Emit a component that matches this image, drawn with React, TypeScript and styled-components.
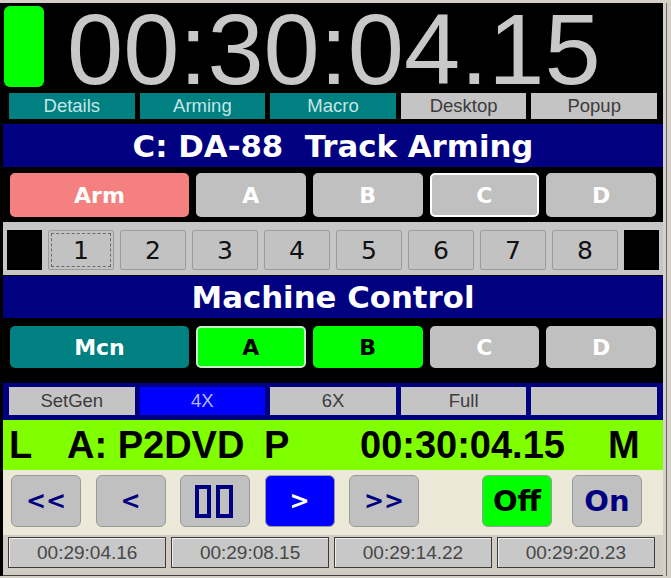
import React from "react";
import styled, { createGlobalStyle } from "styled-components";

const GlobalStyle = createGlobalStyle`
  html, body { margin: 0; padding: 0; background: #d4d0c8; }
  body {
    width: 671px; height: 578px; overflow: hidden;
    font-family: "Liberation Sans", Arial, sans-serif;
  }
`;

const TAHOMA = `"DejaVu Sans", Verdana, sans-serif`;

const Page = styled.div`
  padding-top: 3px;
  display: flex;
`;

const Panel = styled.div`
  width: 660px;
  padding-left: 3px;
  background: #000;
  display: flex;
  flex-direction: column;
  box-shadow: 3px 0 0 #d4d0c8, 4px 0 0 #6c6c6c;
`;

const TopArea = styled.div`
  height: 90px;
  display: flex;
  align-items: flex-start;
`;

const Indicator = styled.div`
  margin: 3px 0 0 1px;
  width: 40px;
  height: 81px;
  background: #00ff00;
  border-radius: 6px;
`;

const BigTime = styled.div`
  margin: 2px 0 0 23px;
  height: 86px;
  color: #c8c8c8;
  font-size: 101px;
  line-height: 88px;
  white-space: nowrap;
`;

const TabBar = styled.div`
  display: grid;
  grid-template-columns: repeat(5, 1fr);
  gap: 5px;
  padding: 0 6px;
  height: 26px;
`;

const Tab = styled.div<{ $kind: "teal" | "gray" | "blue" }>`
  display: flex;
  align-items: center;
  justify-content: center;
  font-size: 18.5px;
  line-height: 22px;
  background: ${(p) => (p.$kind === "teal" ? "#008080" : p.$kind === "blue" ? "#0000ff" : "#c4c4c4")};
  color: ${(p) => (p.$kind === "teal" ? "#c4e6e6" : p.$kind === "blue" ? "#b4b8ff" : "#3c3c3c")};
`;

const Header = styled.div<{ $mt: number; $h: number }>`
  margin-top: ${(p) => p.$mt}px;
  height: ${(p) => p.$h}px;
  background: #000080;
  color: #fff;
  font-family: ${TAHOMA};
  font-weight: bold;
  font-size: 30.8px;
  line-height: 36px;
  white-space: pre;
  display: flex;
  align-items: center;
  justify-content: center;
`;

const ButtonRow = styled.div<{ $mt: number; $h: number }>`
  margin-top: ${(p) => p.$mt}px;
  height: ${(p) => p.$h}px;
  padding: 0 7px;
  display: grid;
  grid-template-columns: 179px repeat(4, 1fr);
  gap: 7px;
`;

const BigButton = styled.div<{ $bg: string; $fg?: string; $ring?: string }>`
  background: ${(p) => p.$bg};
  color: ${(p) => p.$fg ?? "#fff"};
  border: 2px solid ${(p) => p.$ring ?? p.$bg};
  border-radius: 5px;
  box-sizing: border-box;
  font-family: ${TAHOMA};
  font-weight: bold;
  font-size: 22px;
  display: flex;
  align-items: center;
  justify-content: center;
`;

const NumberStrip = styled.div`
  margin-top: 5px;
  height: 40px;
  padding: 8px 4px 5px;
  background: #c6c6c6;
  display: grid;
  grid-template-columns: 35px repeat(8, 1fr) 35px;
  gap: 6px;
`;

const BlackSquare = styled.div`
  background: #000;
`;

const NumButton = styled.div<{ $focus?: boolean }>`
  position: relative;
  background: #c2c2c2;
  border: 1px solid #9c9c9c;
  border-radius: 2px;
  display: flex;
  align-items: center;
  justify-content: center;
  font-family: ${TAHOMA};
  font-size: 25px;
  color: #111;
  &::after {
    content: "";
    display: ${(p) => (p.$focus ? "block" : "none")};
    position: absolute;
    inset: 2px;
    border: 1px dashed #6a6a6a;
  }
`;

const SpeedFrame = styled.div`
  margin-top: 15px;
  background: #000080;
  padding: 4px 6px 5px;
  height: 28px;
  display: grid;
  grid-template-columns: repeat(5, 1fr);
  gap: 5px;
`;

const StatusBar = styled.div`
  height: 50px;
  background: #80ff00;
  padding-left: 6px;
  display: grid;
  grid-template-columns: 58px 197px 96px 248px 1fr;
  align-items: center;
  font-size: 38px;
  line-height: 44px;
  font-weight: bold;
  color: #000;
  white-space: nowrap;
`;

const Transport = styled.div`
  height: 52px;
  background: #ece9d8;
  padding: 5px 21px 8px 8px;
  display: flex;
`;

const TGroup = styled.div<{ $gap: number; $ml?: string }>`
  display: flex;
  gap: ${(p) => p.$gap}px;
  margin-left: ${(p) => p.$ml ?? "0"};
`;

const TButton = styled.div<{ $bg?: string; $fg?: string; $size?: number }>`
  width: 70px;
  height: 52px;
  box-sizing: border-box;
  background: ${(p) => p.$bg ?? "#c0c0c0"};
  color: ${(p) => p.$fg ?? "#000080"};
  border: 1px solid #9a9a9a;
  border-radius: 6px;
  display: flex;
  align-items: center;
  justify-content: center;
  font-family: ${TAHOMA};
  font-weight: bold;
  font-size: ${(p) => p.$size ?? 24}px;
`;

const TimeRow = styled.div`
  height: 38px;
  padding: 2px 8px 0 5px;
  background: #d0ccc4;
  border-bottom: 1px solid #404040;
  display: grid;
  grid-template-columns: repeat(4, 1fr);
  gap: 4.5px;
  align-items: start;
`;

const TimeField = styled.div`
  height: 29px;
  background: #c8c8c8;
  border: 1px solid #3c3c3c;
  box-shadow: inset 1px 1px 0 #eeeeee;
  display: flex;
  align-items: center;
  justify-content: center;
  font-size: 19px;
  line-height: 22px;
  color: #474747;
`;

const PauseIcon = () => (
  <svg width="40" height="33" viewBox="0 0 40 33">
    <rect x="2" y="2" width="12" height="29" fill="none" stroke="#000080" strokeWidth="4" />
    <rect x="23" y="2" width="13" height="29" fill="none" stroke="#000080" strokeWidth="4" />
  </svg>
);

export default function App() {
  return (
    <>
      <GlobalStyle />
      <Page>
        <Panel>
          <TopArea>
            <Indicator />
            <BigTime>00:30:04.15</BigTime>
          </TopArea>
          <TabBar>
            <Tab $kind="teal">Details</Tab>
            <Tab $kind="teal">Arming</Tab>
            <Tab $kind="teal">Macro</Tab>
            <Tab $kind="gray">Desktop</Tab>
            <Tab $kind="gray">Popup</Tab>
          </TabBar>
          <Header $mt={5} $h={43}>{"C: DA-88  Track Arming"}</Header>
          <ButtonRow $mt={6} $h={44}>
            <BigButton $bg="#f48080">Arm</BigButton>
            <BigButton $bg="#c0c0c0">A</BigButton>
            <BigButton $bg="#c0c0c0">B</BigButton>
            <BigButton $bg="#c0c0c0" $ring="#ffffff">C</BigButton>
            <BigButton $bg="#c0c0c0">D</BigButton>
          </ButtonRow>
          <NumberStrip>
            <BlackSquare />
            {[1, 2, 3, 4, 5, 6, 7, 8].map((n) => (
              <NumButton key={n} $focus={n === 1}>{n}</NumButton>
            ))}
            <BlackSquare />
          </NumberStrip>
          <Header $mt={1} $h={42}>Machine Control</Header>
          <ButtonRow $mt={8} $h={42}>
            <BigButton $bg="#008080">Mcn</BigButton>
            <BigButton $bg="#00ff00" $fg="#000" $ring="#c8f0c8">A</BigButton>
            <BigButton $bg="#00ff00" $fg="#000">B</BigButton>
            <BigButton $bg="#c0c0c0">C</BigButton>
            <BigButton $bg="#c0c0c0">D</BigButton>
          </ButtonRow>
          <SpeedFrame>
            <Tab $kind="gray">SetGen</Tab>
            <Tab $kind="blue">4X</Tab>
            <Tab $kind="gray">6X</Tab>
            <Tab $kind="gray">Full</Tab>
            <Tab $kind="gray"></Tab>
          </SpeedFrame>
          <StatusBar>
            <span>L</span>
            <span>A: P2DVD</span>
            <span>P</span>
            <span>00:30:04.15</span>
            <span>M</span>
          </StatusBar>
          <Transport>
            <TGroup $gap={14.5}>
              <TButton>&lt;&lt;</TButton>
              <TButton>&lt;</TButton>
              <TButton><PauseIcon /></TButton>
              <TButton $bg="#0000ff" $fg="#ffffff">&gt;</TButton>
              <TButton>&gt;&gt;</TButton>
            </TGroup>
            <TGroup $gap={20} $ml="auto">
              <TButton $bg="#00ff00" $fg="#000" $size={29}>Off</TButton>
              <TButton $size={29}>On</TButton>
            </TGroup>
          </Transport>
          <TimeRow>
            <TimeField>00:29:04.16</TimeField>
            <TimeField>00:29:08.15</TimeField>
            <TimeField>00:29:14.22</TimeField>
            <TimeField>00:29:20.23</TimeField>
          </TimeRow>
        </Panel>
      </Page>
    </>
  );
}
